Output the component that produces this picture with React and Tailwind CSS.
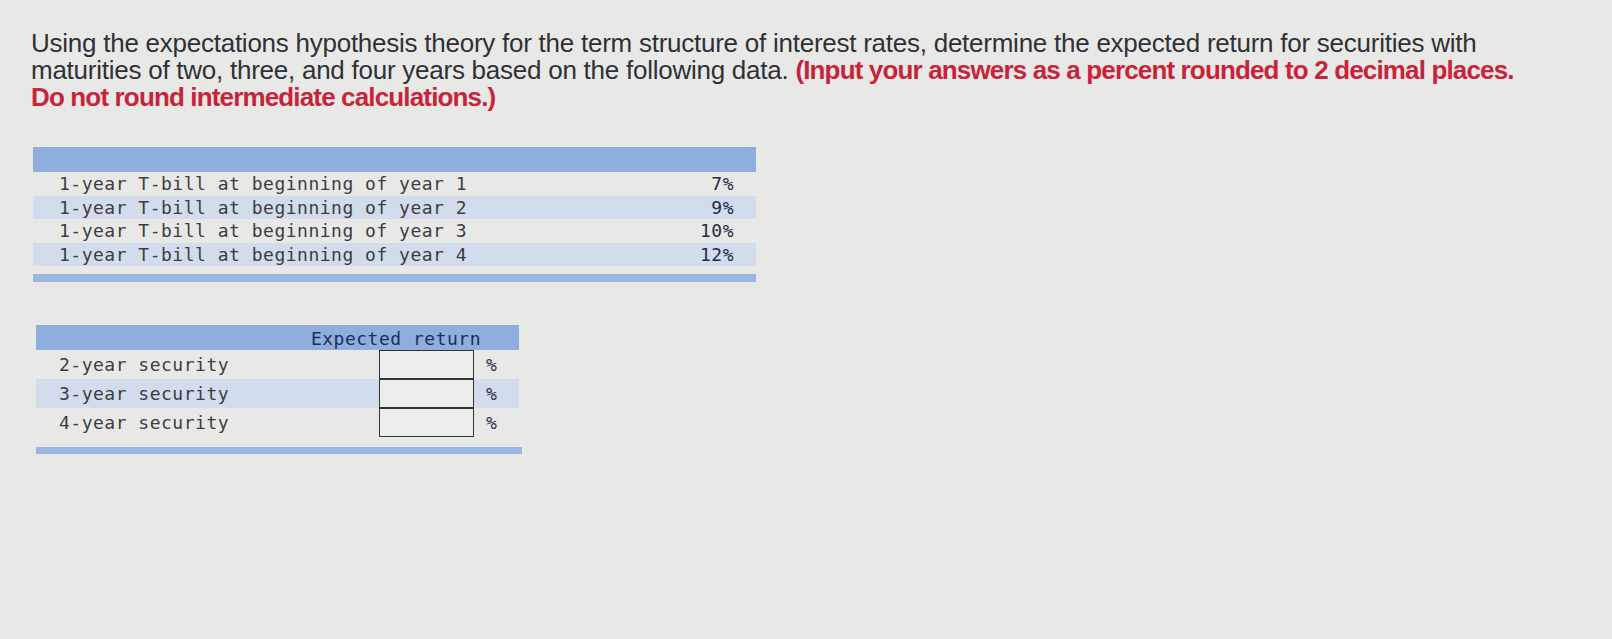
const rates = [
  { label: "1-year T-bill at beginning of year 1", value: "7%" },
  { label: "1-year T-bill at beginning of year 2", value: "9%" },
  { label: "1-year T-bill at beginning of year 3", value: "10%" },
  { label: "1-year T-bill at beginning of year 4", value: "12%" },
];

const securities = ["2-year security", "3-year security", "4-year security"];

const mono = { fontFamily: '"DejaVu Sans Mono", "Liberation Mono", monospace' };

function RatesTable() {
  return (
    <div className="ml-[33px] w-[723px]" style={mono}>
      <div className="h-[25px] bg-[#8eaede]" />
      {rates.map((r, i) => (
        <div
          key={r.label}
          className={`flex h-[23.5px] items-center justify-between pl-[26px] pr-[22px] text-[18px] leading-[23px] tracking-[0.5px] ${
            i % 2 === 1 ? "bg-[#d2dcec]" : ""
          }`}
        >
          <span className="text-[#3d3d3d]">{r.label}</span>
          <span className="text-[#1f2b47]">{r.value}</span>
        </div>
      ))}
      <div className="mt-[8px] h-[8px] bg-[#9bb6e0]" />
    </div>
  );
}

function SecurityTable() {
  return (
    <div className="ml-[36px] w-[486px]" style={mono}>
      <div className="flex h-[25px] w-[483px] items-end justify-end bg-[#8eaede] pr-[38px] text-[18px] leading-[23px] tracking-[0.5px] text-[#1e2d5a]">
        Expected return
      </div>
      {securities.map((s, i) => (
        <div
          key={s}
          className={`flex h-[29px] w-[483px] items-center text-[18px] leading-[23px] tracking-[0.5px] ${
            i === 1 ? "bg-[#d2dcec]" : ""
          }`}
        >
          <span className="w-[343px] pl-[23px] text-[#3d3d3d]">{s}</span>
          <div className="h-[29px] w-[95px] border border-[#333] bg-[#eceeec]" />
          <span className="pl-[12px] text-[#2a3350]">%</span>
        </div>
      ))}
      <div className="mt-[10px] h-[7px] bg-[#9bb6e0]" />
    </div>
  );
}

export default function App() {
  return (
    <div className="min-h-[639px] w-[1612px] bg-[#e8e9e7] pt-[30px]">
      <p
        className="whitespace-nowrap pl-[31px] text-[26px] leading-[27px] tracking-[-0.25px] text-[#2f3136]"
        style={{ fontFamily: '"Liberation Sans", Arial, sans-serif' }}
      >
        Using the expectations hypothesis theory for the term structure of interest rates, determine the expected
        return for securities with
        <br />
        maturities of two, three, and four years based on the following data.{" "}
        <b className="font-bold tracking-[-0.85px] text-[#c9233a]">
          (Input your answers as a percent rounded to 2 decimal places.
          <br />
          Do not round intermediate calculations.)
        </b>
      </p>
      <div className="mt-[36px]">
        <RatesTable />
      </div>
      <div className="mt-[43px]">
        <SecurityTable />
      </div>
    </div>
  );
}
